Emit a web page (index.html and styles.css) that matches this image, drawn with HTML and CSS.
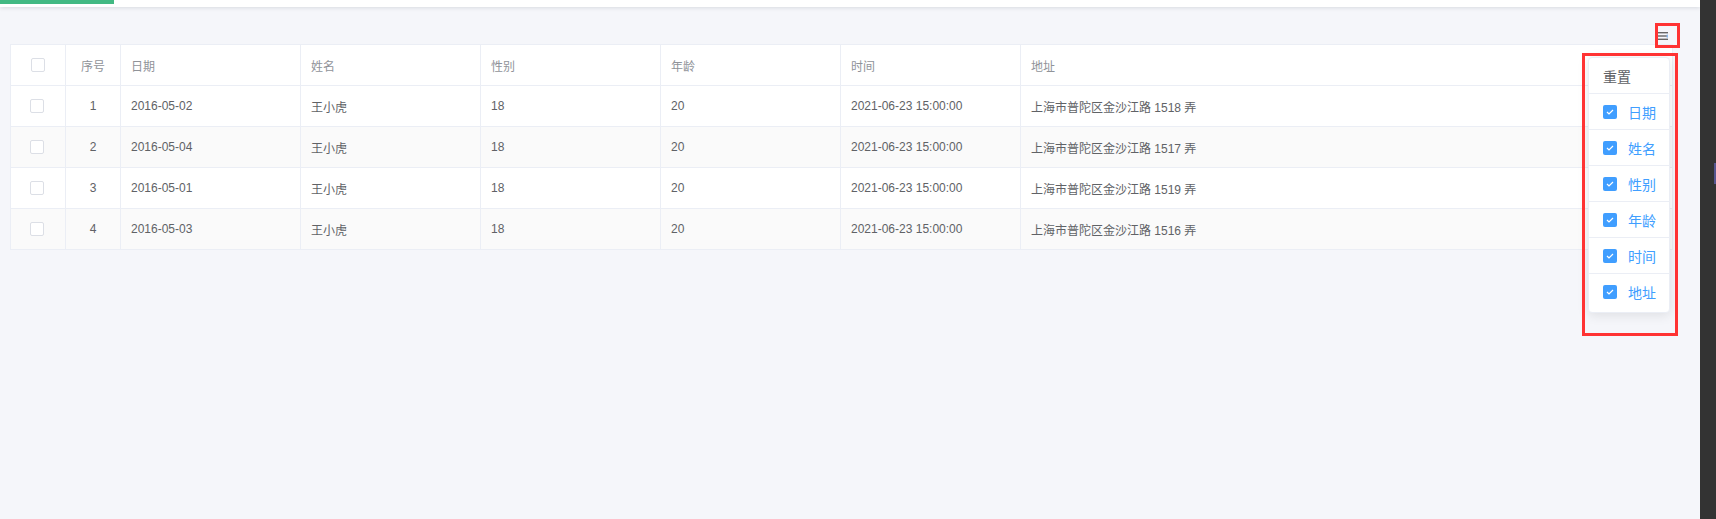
FILE: index.html
```html
<!DOCTYPE html>
<html lang="zh-CN">
<head>
<meta charset="utf-8">
<title>表格列设置</title>
<link rel="stylesheet" href="styles.css">
</head>
<body>
<div class="page">
  <div class="main">
    <div class="topbar"><div class="tab-active"></div></div>
    <div class="content">
      <div class="toolbar">
        <button class="col-btn" aria-label="列设置">
          <svg width="10" height="8" viewBox="0 0 10 8"><rect x="0" y="0" width="10" height="1.4" fill="#666"/><rect x="0" y="3.3" width="10" height="1.4" fill="#666"/><rect x="0" y="6.6" width="10" height="1.4" fill="#666"/><rect x="8.6" y="2.6" width="1.4" height="3" fill="#8ab8ee"/></svg>
        </button>
      </div>
      <table class="grid">
        <colgroup>
          <col class="c-sel"><col class="c-idx"><col class="c-w"><col class="c-w"><col class="c-w"><col class="c-w"><col class="c-w"><col>
        </colgroup>
        <thead>
          <tr>
            <th class="center"><span class="cb"></span></th>
            <th class="center">序号</th>
            <th>日期</th><th>姓名</th><th>性别</th><th>年龄</th><th>时间</th><th>地址</th>
          </tr>
        </thead>
        <tbody>
          <tr>
            <td class="center"><span class="cb cb-body"></span></td><td class="center">1</td>
            <td>2016-05-02</td><td>王小虎</td><td>18</td><td>20</td><td>2021-06-23 15:00:00</td><td>上海市普陀区金沙江路 1518 弄</td>
          </tr>
          <tr class="stripe">
            <td class="center"><span class="cb cb-body"></span></td><td class="center">2</td>
            <td>2016-05-04</td><td>王小虎</td><td>18</td><td>20</td><td>2021-06-23 15:00:00</td><td>上海市普陀区金沙江路 1517 弄</td>
          </tr>
          <tr>
            <td class="center"><span class="cb cb-body"></span></td><td class="center">3</td>
            <td>2016-05-01</td><td>王小虎</td><td>18</td><td>20</td><td>2021-06-23 15:00:00</td><td>上海市普陀区金沙江路 1519 弄</td>
          </tr>
          <tr class="stripe">
            <td class="center"><span class="cb cb-body"></span></td><td class="center">4</td>
            <td>2016-05-03</td><td>王小虎</td><td>18</td><td>20</td><td>2021-06-23 15:00:00</td><td>上海市普陀区金沙江路 1516 弄</td>
          </tr>
        </tbody>
      </table>
    </div>

    <div class="col-popover">
      <div class="pop-row pop-reset">重置</div>
      <label class="pop-row"><span class="cb-on"><svg width="8" height="6" viewBox="0 0 8 6"><path d="M1 3 L3 5 L7 1" fill="none" stroke="#fff" stroke-width="1.2"/></svg></span><span class="pop-label">日期</span></label>
      <label class="pop-row"><span class="cb-on"><svg width="8" height="6" viewBox="0 0 8 6"><path d="M1 3 L3 5 L7 1" fill="none" stroke="#fff" stroke-width="1.2"/></svg></span><span class="pop-label">姓名</span></label>
      <label class="pop-row"><span class="cb-on"><svg width="8" height="6" viewBox="0 0 8 6"><path d="M1 3 L3 5 L7 1" fill="none" stroke="#fff" stroke-width="1.2"/></svg></span><span class="pop-label">性别</span></label>
      <label class="pop-row"><span class="cb-on"><svg width="8" height="6" viewBox="0 0 8 6"><path d="M1 3 L3 5 L7 1" fill="none" stroke="#fff" stroke-width="1.2"/></svg></span><span class="pop-label">年龄</span></label>
      <label class="pop-row"><span class="cb-on"><svg width="8" height="6" viewBox="0 0 8 6"><path d="M1 3 L3 5 L7 1" fill="none" stroke="#fff" stroke-width="1.2"/></svg></span><span class="pop-label">时间</span></label>
      <label class="pop-row pop-last"><span class="cb-on"><svg width="8" height="6" viewBox="0 0 8 6"><path d="M1 3 L3 5 L7 1" fill="none" stroke="#fff" stroke-width="1.2"/></svg></span><span class="pop-label">地址</span></label>
    </div>

    <div class="mark mark-icon"></div>
    <div class="mark mark-pop"></div>
  </div>
  <div class="side-dark"><span class="side-accent"></span></div>
</div>
</body>
</html>
```

FILE: styles.css
```css
* { box-sizing: border-box; }
html, body { margin: 0; padding: 0; }
body {
  font-family: "Liberation Sans", "Noto Sans CJK SC", sans-serif;
  background: #333;
  width: 1716px;
  height: 519px;
  overflow: hidden;
}
.page { display: flex; height: 519px; }
.main {
  position: relative;
  width: 1700px;
  height: 519px;
  background: #f5f6fa;
}
.topbar {
  height: 7px;
  background: #fff;
  box-shadow: 0 1px 4px rgba(0, 21, 41, 0.12);
  position: relative;
}
.tab-active { width: 114px; height: 4px; background: #42b983; }
.content { padding: 0 27px 0 10px; }
.toolbar {
  height: 37px;
  display: flex;
  justify-content: flex-end;
  align-items: flex-end;
  padding: 0 5px 4px 0;
}
.col-btn {
  border: 0;
  padding: 0;
  background: transparent;
  width: 10px;
  height: 8px;
  display: block;
  line-height: 0;
}
.grid {
  width: 100%;
  table-layout: fixed;
  border-collapse: separate;
  border-spacing: 0;
  border-top: 1px solid #ebeef5;
  border-left: 1px solid #ebeef5;
  background: #fff;
  font-size: 12px;
  color: #606266;
}
.c-sel, .c-idx { width: 55px; }
.c-w { width: 180px; }
.grid th, .grid td {
  height: 41px;
  padding: 0 10px;
  border-right: 1px solid #ebeef5;
  border-bottom: 1px solid #ebeef5;
  text-align: left;
  white-space: nowrap;
}
.grid th { color: #909399; font-weight: normal; }
.grid .center { text-align: center; padding: 0; }
.grid tr.stripe td { background: #fafafa; }
.cb {
  display: inline-block;
  width: 14px;
  height: 14px;
  border: 1px solid #dcdfe6;
  border-radius: 2px;
  background: #fff;
  vertical-align: middle;
}
.cb-body { margin-left: -3px; }
.col-popover {
  position: absolute;
  top: 57px;
  right: 30px;
  width: 82px;
  background: #fff;
  border: 1px solid #ebeef5;
  border-radius: 4px;
  box-shadow: 0 2px 12px rgba(0, 0, 0, 0.1);
  padding-bottom: 2px;
}
.pop-row {
  display: flex;
  align-items: center;
  height: 36px;
  padding-left: 14px;
  border-bottom: 1px solid #ebeef5;
  font-size: 14px;
  color: #409eff;
}
.pop-reset { height: 36px; color: #606266; }
.pop-last { border-bottom: 0; }
.cb-on {
  width: 14px;
  height: 14px;
  border-radius: 2px;
  background: #409eff;
  display: flex;
  align-items: center;
  justify-content: center;
  flex: none;
}
.pop-label { margin-left: 11px; }
.mark {
  position: absolute;
  border: 3px solid #f33;
  pointer-events: none;
}
.mark-icon { left: 1655px; top: 23px; width: 25px; height: 25px; }
.mark-pop { left: 1582px; top: 53px; width: 96px; height: 283px; }
.side-dark {
  width: 16px;
  height: 519px;
  background: #333;
  position: relative;
}
.side-accent {
  position: absolute;
  right: 0;
  top: 163px;
  width: 2px;
  height: 21px;
  background: #55558f;
}
```
